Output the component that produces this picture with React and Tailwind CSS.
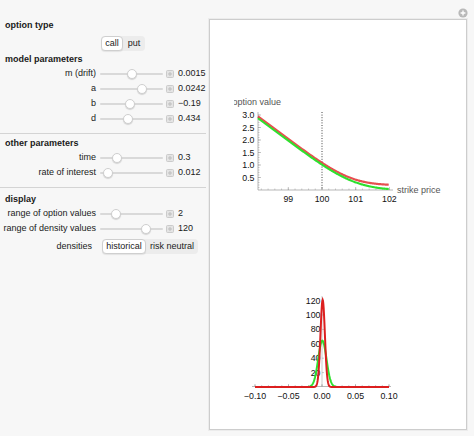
import React from 'react';

// --- small math helpers for the two plots ---
const erf = (x) => {
  const s = Math.sign(x);
  const a = Math.abs(x);
  const t = 1 / (1 + 0.3275911 * a);
  const y = 1 - ((((1.061405429 * t - 1.453152027) * t + 1.421413741) * t - 0.284496736) * t + 0.254829592) * t * Math.exp(-a * a);
  return s * y;
};
const pdf = (x) => Math.exp(-x * x / 2) / Math.sqrt(2 * Math.PI);
const cdf = (x) => 0.5 * (1 + erf(x / Math.SQRT2));
const callValue = (k, mu, sd) => {
  const d = (mu - k) / sd;
  return (mu - k) * cdf(d) + sd * pdf(d);
};
const greenValue = (k) => callValue(k, 100.97, 0.8);
const redValue = (k) => greenValue(k) + 0.07 + 0.12 / (1 + Math.exp(-(k - 101.3) / 0.4));
const density = (x, mu, sd) => pdf((x - mu) / sd) / sd;

const X1 = (s) => 322 + (s - 100) * 33.7;
const Y1 = (v) => 190 - v * 25;
const X2 = (v) => 322 + v * 670;
const Y2 = (d) => 387 - d * 0.72;

const buildPath = (from, to, step, fn, fx, fy) => {
  let d = '';
  for (let s = from; s <= to + 1e-9; s += step) {
    d += (d ? 'L' : 'M') + fx(s).toFixed(2) + ' ' + fy(fn(s)).toFixed(2);
  }
  return d;
};

const sliders1 = [
  { label: 'm (drift)', thumb: 32, value: '0.0015' },
  { label: 'a', thumb: 42, value: '0.0242' },
  { label: 'b', thumb: 30, value: '\u22120.19' },
  { label: 'd', thumb: 28, value: '0.434' },
];
const sliders2 = [
  { label: 'time', thumb: 17, value: '0.3' },
  { label: 'rate of interest', thumb: 8, value: '0.012' },
];
const sliders3 = [
  { label: 'range of option values', thumb: 16, value: '2' },
  { label: 'range of density values', thumb: 46, value: '120' },
];

const PlusBox = () => (
  <svg width="8" height="8" viewBox="0 0 8 8" className="ml-[3px] shrink-0">
    <rect x="0.5" y="0.5" width="7" height="7" rx="1" fill="#e4e4e4" stroke="#cbcbcb" />
    <path d="M4 2v4M2 4h4" stroke="#bdbdbd" strokeWidth="1" />
  </svg>
);

const SliderRow = ({ label, thumb, value }) => (
  <div className="flex items-center h-[15px]">
    <div className="w-[96px] text-right whitespace-nowrap">{label}</div>
    <div className="relative ml-[4px] w-[63px] h-[12px] shrink-0">
      <div className="absolute left-0 right-0 top-[5px] h-[2px] rounded bg-[#d9d9d9]" />
      <div
        className="absolute top-[1px] w-[10px] h-[10px] rounded-full bg-white border border-[#cfcfcf] shadow-[0_1px_1px_rgba(0,0,0,0.15)]"
        style={{ left: thumb - 5 }}
      />
    </div>
    <PlusBox />
    <span className="ml-[4px]">{value}</span>
  </div>
);

const Toggle = ({ items, active, widths }) => (
  <div className="flex rounded-[4px] bg-[#ececec] h-[15px]">
    {items.map((item, i) => (
      <div
        key={item}
        className={
          i === active
            ? 'flex items-center justify-center rounded-[4px] bg-white border border-[#cfcfcf] shadow-[0_1px_1px_rgba(0,0,0,0.08)]'
            : 'flex items-center justify-center'
        }
        style={{ width: widths[i] }}
      >
        {item}
      </div>
    ))}
  </div>
);

const Header = ({ children, className = '' }) => (
  <div className={'pl-[5px] font-bold h-[14px] flex items-center ' + className}>{children}</div>
);

const Plots = () => {
  const green = buildPath(98.1, 101.98, 0.02, greenValue, X1, Y1);
  const red = buildPath(98.1, 101.98, 0.02, redValue, X1, Y1);
  const gDens = buildPath(-0.1, 0.1, 0.0005, (x) => density(x, 0.0005, 0.0062), X2, Y2);
  const rDens = buildPath(-0.1, 0.1, 0.0005, (x) => density(x, 0.001, 0.0033), X2, Y2);

  const yTicks1 = [0.5, 1, 1.5, 2, 2.5, 3];
  const minorY1 = [];
  for (let v = 0.1; v <= 3.05; v += 0.1) minorY1.push(v);
  const minorX1 = [];
  for (let s = 98.2; s <= 102.05; s += 0.2) minorX1.push(s);
  const minorX2 = [];
  for (let v = -0.1; v <= 0.1001; v += 0.01) minorX2.push(v);
  const yTicks2 = [20, 40, 60, 80, 100, 120];

  return (
    <svg
      width="256"
      height="409"
      viewBox="210 20 256 409"
      className="block"
      fontFamily="'Liberation Sans', Arial, sans-serif"
    >
      <defs>
        <clipPath id="labelClip">
          <rect x="234" y="90" width="100" height="20" />
        </clipPath>
      </defs>

      {/* option value plot */}
      <text x="232.5" y="105" fontSize="9" fill="#555" clipPath="url(#labelClip)">option value</text>
      <line x1="258" y1="190" x2="393" y2="190" stroke="#999" strokeWidth="0.7" />
      <line x1="258" y1="190" x2="258" y2="112" stroke="#999" strokeWidth="0.7" />
      {minorY1.map((v) => (
        <line key={'my' + v} x1="258" x2="259.5" y1={Y1(v)} y2={Y1(v)} stroke="#999" strokeWidth="0.5" />
      ))}
      {yTicks1.map((v) => (
        <g key={'y' + v}>
          <line x1="258" x2="261" y1={Y1(v)} y2={Y1(v)} stroke="#999" strokeWidth="0.6" />
          <text x="254.5" y={Y1(v) + 3} fontSize="8.8" textAnchor="end" fill="#111">{v.toFixed(1)}</text>
        </g>
      ))}
      {minorX1.map((s) => (
        <line key={'mx' + s} x1={X1(s)} x2={X1(s)} y1="190" y2="188.5" stroke="#999" strokeWidth="0.5" />
      ))}
      {[99, 100, 101, 102].map((s) => (
        <g key={'x' + s}>
          <line x1={X1(s)} x2={X1(s)} y1="190" y2="187" stroke="#999" strokeWidth="0.6" />
          <text x={X1(s)} y="202" fontSize="8.8" textAnchor="middle" fill="#111">{s}</text>
        </g>
      ))}
      <text x="397" y="193" fontSize="9" fill="#555">strike price</text>
      <line x1="322" y1="112" x2="322" y2="190" stroke="#111" strokeWidth="0.8" strokeDasharray="1 1.6" />
      <path d={red} fill="none" stroke="#e23030" strokeWidth="2.2" strokeOpacity="0.85" />
      <path d={green} fill="none" stroke="#2ee02e" strokeWidth="2.1" />

      {/* density plot */}
      <line x1="252" y1="386.5" x2="391" y2="386.5" stroke="#999" strokeWidth="0.7" />
      <line x1="322" y1="386.5" x2="322" y2="296" stroke="#aaa" strokeWidth="0.6" />
      {minorX2.map((v) => (
        <line key={'dx' + v} x1={X2(v)} x2={X2(v)} y1="386.5" y2="385" stroke="#999" strokeWidth="0.5" />
      ))}
      {[-0.1, -0.05, 0, 0.05, 0.1].map((v) => (
        <g key={'dxl' + v}>
          <line x1={X2(v)} x2={X2(v)} y1="386.5" y2="384" stroke="#999" strokeWidth="0.6" />
          <text x={X2(v)} y="398.5" fontSize="8.8" textAnchor="middle" fill="#111">
            {(v < 0 ? '\u2212' : '') + Math.abs(v).toFixed(2)}
          </text>
        </g>
      ))}
      {yTicks2.map((v) => (
        <g key={'dy' + v}>
          <line x1="322" x2="324" y1={Y2(v)} y2={Y2(v)} stroke="#999" strokeWidth="0.5" />
          <text x="320.5" y={Y2(v) + 3} fontSize="8.8" textAnchor="end" fill="#111">{v}</text>
        </g>
      ))}
      <path d={gDens} fill="none" stroke="#2ee02e" strokeWidth="2" />
      <path d={rDens} fill="none" stroke="#dc1f1f" strokeWidth="2" />
    </svg>
  );
};

const App = () => {
  return (
    <div className="w-[474px] h-[436px] flex bg-[#f7f7f7] text-[9px] text-[#1a1a1a] font-['Liberation_Sans',Arial,sans-serif] leading-none overflow-hidden">
      {/* controls */}
      <div className="w-[207px] shrink-0 pt-[18px]">
        <Header className="h-[15px]">option type</Header>
        <div className="ml-[101px] mt-[3px] w-fit">
          <Toggle items={['call', 'put']} active={0} widths={[22, 22]} />
        </div>
        <Header className="mt-[1px]">model parameters</Header>
        {sliders1.map((s) => (
          <SliderRow key={s.label} {...s} />
        ))}
        <div className="mt-[7px] h-px bg-[#d4d4d4] w-[206px]" />
        <Header className="mt-[2px]">other parameters</Header>
        {sliders2.map((s) => (
          <SliderRow key={s.label} {...s} />
        ))}
        <div className="mt-[7px] h-px bg-[#d4d4d4] w-[206px]" />
        <Header className="mt-[4px]">display</Header>
        {sliders3.map((s) => (
          <SliderRow key={s.label} {...s} />
        ))}
        <div className="flex items-center mt-[3px]">
          <div className="w-[92px] text-right">densities</div>
          <div className="ml-[10px]">
            <Toggle items={['historical', 'risk neutral']} active={0} widths={[44, 52]} />
          </div>
        </div>
      </div>

      {/* output */}
      <div className="flex-1 flex flex-col pl-[2px] pr-[7px] pb-[6px]">
        <div className="h-[19px] flex justify-end items-start pt-[8px] -mr-[1px]">
          <svg width="10" height="10" viewBox="0 0 10 10">
            <circle cx="5" cy="5" r="4.6" fill="#b9b9b9" />
            <path d="M5 2.6v4.8M2.6 5h4.8" stroke="#fff" strokeWidth="1.3" />
          </svg>
        </div>
        <div className="flex-1 bg-white border border-[#cdcdcd] shadow-[0_0_0_1px_#ececec] overflow-hidden">
          <Plots />
        </div>
      </div>
    </div>
  );
};

export default App;
